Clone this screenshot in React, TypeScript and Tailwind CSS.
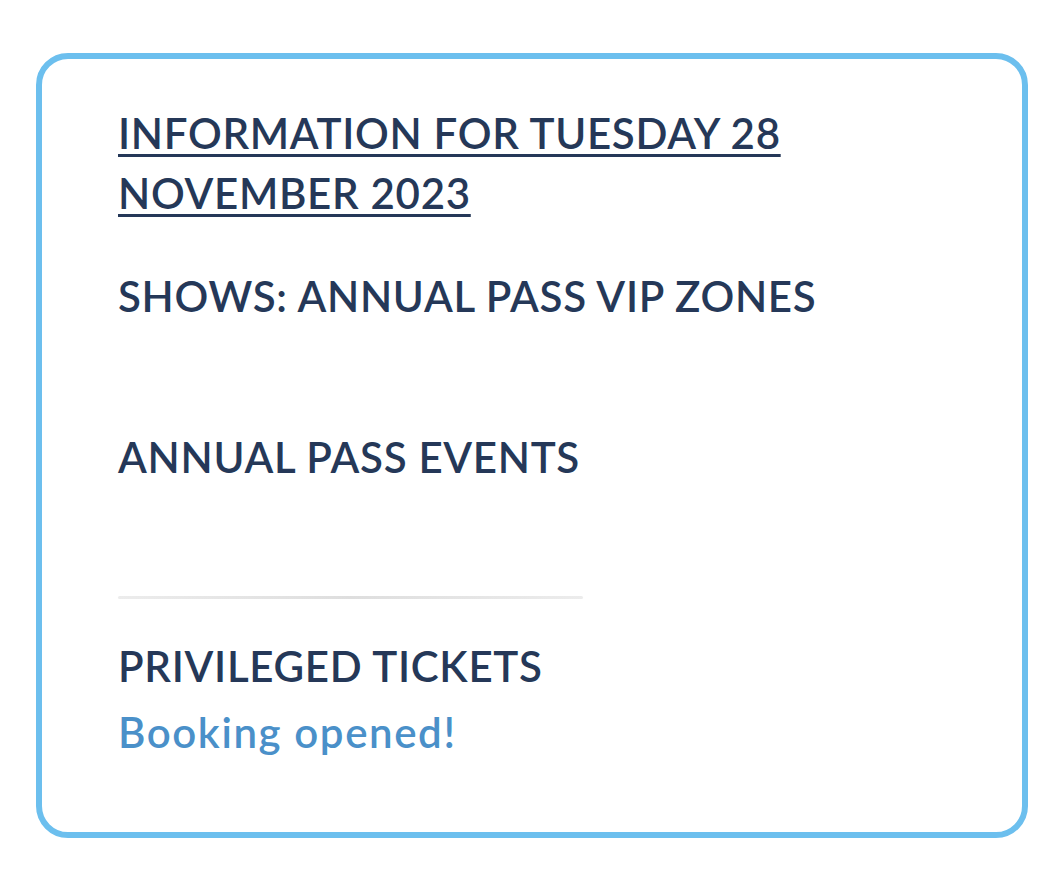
export default function App() {
  return (
    <div className="bg-white w-[1062px] h-[880px] pt-[53px] pl-[36px]" style={{ fontFamily: "Lato, 'Noto Sans', sans-serif" }}>
      <div className="w-[992px] h-[785px] border-[6px] border-[#6cbfee] rounded-[32px] pl-[76px] pt-[44px] text-[42px] leading-[60px] font-semibold tracking-[0.7px] text-[#253858]">
        <h2 className="underline decoration-[3px] underline-offset-[5px] w-[700px]">
          INFORMATION FOR TUESDAY 28 NOVEMBER 2023
        </h2>
        <p className="mt-[43px]">SHOWS: ANNUAL PASS VIP ZONES</p>
        <p className="mt-[101px]">ANNUAL PASS EVENTS</p>
        <div className="mt-[109px] w-[465px] h-[3px] rounded-full bg-linear-to-r from-[#ececec] via-[#dedede] to-[#ececec]"></div>
        <p className="mt-[37px]">PRIVILEGED TICKETS</p>
        <p className="mt-[6px] text-[#4a90c9] tracking-[1.6px]">Booking opened!</p>
      </div>
    </div>
  );
}
